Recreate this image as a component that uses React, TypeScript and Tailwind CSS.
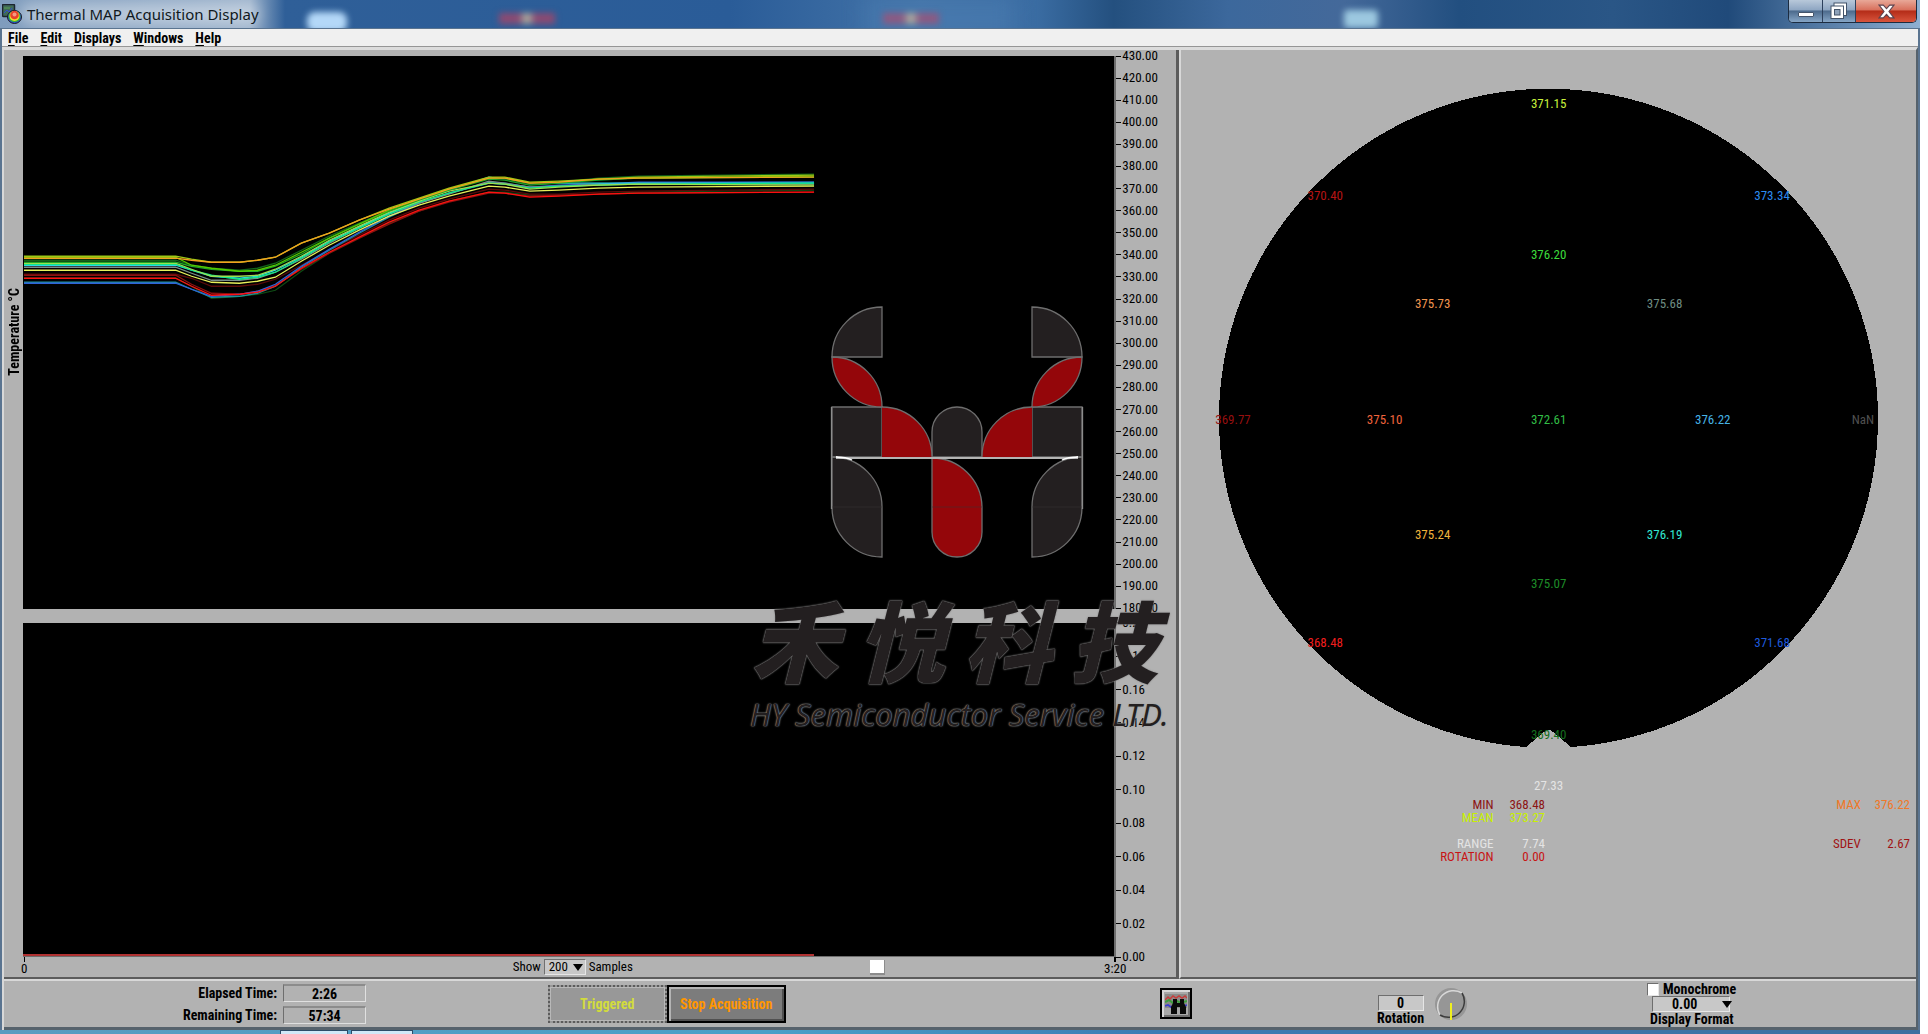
import { useState } from "react";

const menus = ["File", "Edit", "Displays", "Windows", "Help"];

const tempTicks = Array.from({ length: 26 }, (_, i) => (430 - i * 10).toFixed(2));
const rateTicks = Array.from({ length: 11 }, (_, i) => (0.2 - i * 0.02).toFixed(2));

// sample positions and trace heights in plot units (1094 x 552)
const sampleX = [1, 153, 169, 189, 217, 235, 253, 279, 307, 337, 367, 397, 427, 467, 483, 508, 537, 577, 617, 793];

const traces = [
  { color: "#0e4a14", y: [222, 222, 230, 242, 240, 238, 234, 215, 197, 182, 167, 155, 145, 136, 136, 139, 139, 138, 136, 134] },
  { color: "#5a0a0a", y: [218, 218, 222, 230, 230, 228, 223, 209, 194, 179, 164, 152, 143, 133, 134, 138, 138, 136, 135, 133] },
  { color: "#8b1010", y: [219, 219, 228, 237, 238, 235, 229, 213, 197, 182, 168, 155, 146, 137, 137, 140, 139, 138, 137, 136] },
  { color: "#1c8f96", y: [226, 226, 233, 241, 240, 237, 230, 211, 194, 177, 161, 147, 137, 126, 127, 131, 130, 129, 127, 126] },
  { color: "#2f62d8", y: [227, 227, 233, 240, 238, 235, 228, 210, 193, 176, 160, 147, 137, 127, 128, 131, 129, 128, 126, 126] },
  { color: "#ff1010", y: [222, 222, 230, 239, 238, 236, 230, 212, 196, 181, 166, 154, 145, 136, 137, 141, 140, 138, 137, 136] },
  { color: "#e8f05a", y: [214, 214, 220, 226, 227, 225, 221, 205, 189, 174, 160, 149, 140, 130, 131, 135, 134, 132, 131, 130] },
  { color: "#7a8f8a", y: [211, 211, 217, 224, 224, 222, 216, 203, 187, 172, 158, 147, 138, 125, 127, 131, 130, 128, 128, 128] },
  { color: "#29d8e8", y: [209, 209, 214, 220, 222, 220, 214, 201, 185, 171, 157, 145, 134, 121, 123, 128, 127, 127, 127, 127] },
  { color: "#10e884", y: [208, 208, 214, 219, 223, 221, 216, 202, 186, 172, 158, 146, 137, 127, 128, 132, 130, 129, 128, 127] },
  { color: "#9adf50", y: [207, 207, 213, 220, 220, 219, 213, 200, 184, 170, 156, 145, 135, 127, 128, 133, 131, 129, 128, 129] },
  { color: "#20a828", y: [206, 206, 210, 213, 215, 215, 210, 198, 182, 168, 155, 144, 134, 123, 124, 129, 127, 124, 122, 121] },
  { color: "#12641a", y: [204, 204, 209, 212, 214, 212, 207, 194, 180, 167, 154, 143, 133, 122, 123, 128, 126, 122, 120, 118] },
  { color: "#55c800", y: [201, 201, 209, 212, 215, 214, 209, 196, 182, 168, 154, 143, 133, 122, 122, 127, 126, 123, 122, 120] },
  { color: "#9cc814", y: [200, 200, 203, 206, 206, 204, 201, 187, 177, 164, 152, 142, 132, 121, 121, 126, 125, 123, 121, 119] },
  { color: "#f2a020", y: [202, 202, 204, 206, 206, 204, 201, 187, 177, 164, 153, 143, 133, 122, 122, 127, 126, 123, 122, 121] },
];

// thermocouple sites, offsets from the wafer centre in percent of its diameter
const sites = [
  { value: "371.15", x: 0, y: -47.9, color: "text-[#c8f03c]" },
  { value: "376.20", x: 0, y: -24.9, color: "text-[#3cdc3c]" },
  { value: "373.34", x: 33.9, y: -33.9, color: "text-[#2d8cf0]" },
  { value: "370.40", x: -33.9, y: -33.9, color: "text-[#b41414]" },
  { value: "375.73", x: -17.6, y: -17.6, color: "text-[#f09650]" },
  { value: "375.68", x: 17.6, y: -17.6, color: "text-[#6e8c82]" },
  { value: "369.77", x: -47.9, y: 0, color: "text-[#960f0f]" },
  { value: "375.10", x: -24.9, y: 0, color: "text-[#f0643c]" },
  { value: "372.61", x: 0, y: 0, color: "text-[#32be46]" },
  { value: "376.22", x: 24.9, y: 0, color: "text-[#46b4e6]" },
  { value: "NaN", x: 47.7, y: 0, color: "text-[#505050]" },
  { value: "375.24", x: -17.6, y: 17.6, color: "text-[#f0b43c]" },
  { value: "376.19", x: 17.6, y: 17.6, color: "text-[#32e6d2]" },
  { value: "375.07", x: 0, y: 24.9, color: "text-[#1e8c28]" },
  { value: "368.48", x: -33.9, y: 33.9, color: "text-[#f01e1e]" },
  { value: "371.68", x: 33.9, y: 33.9, color: "text-[#1e5adc]" },
  { value: "369.40", x: 0, y: 47.9, color: "text-[#146e1e]" },
];

function TitleBar() {
  return (
    <header className="relative flex h-[28px] shrink-0 items-start overflow-hidden bg-[linear-gradient(90deg,#7f9cbd_0,#9db3cc_250px,#2f5f98_285px,#2a5c98_38%,#4474a8_48%,#3a6ca2_54%,#24507f_58%,#3c689c_64%,#44699a_70%,#224f80_76%,#2a5686_84%,#204a7a_90%,#6b90b8_97%,#8fb0d2_100%)]">
      <div className="absolute left-[20px] top-[4px] h-[20px] w-[240px] rounded-full bg-white/40 blur-[7px]"></div>
      <div className="absolute left-[16%] top-[12px] h-[20px] w-[40px] rounded-lg bg-[#b4d8f8] blur-[3px]"></div>
      <div className="absolute left-[26%] top-[13px] h-[11px] w-[56px] bg-[linear-gradient(90deg,#8c4a72_35%,#b0b8a4_50%,#8c4a72_65%)] blur-[3px]"></div>
      <div className="absolute left-[45%] top-[-2px] h-[40px] w-[150px] bg-[#4a7cb0]/60 blur-[10px]"></div>
      <div className="absolute left-[46%] top-[13px] h-[11px] w-[56px] bg-[linear-gradient(90deg,#8c5a82_35%,#b0b8a4_50%,#8c5a82_65%)] blur-[3px]"></div>
      <div className="absolute left-[70%] top-[10px] h-[18px] w-[34px] rounded bg-[#9cc8e0] blur-[3px]"></div>

      <div className="relative flex items-center gap-[5px] pl-[2px] pt-[4px]">
        <svg viewBox="0 0 20 20" className="h-[20px] w-[20px]">
          <rect x="0.500" y="0.500" width="12" height="12" rx="1" fill="#3f6a58" stroke="#1c2430" strokeWidth="1.500" />
          <path d="M2 9 L5 6 L7 8 L10 4" fill="none" stroke="#3048d8" />
          <path d="M2 4 H8" stroke="#5ca050" />
          <ellipse cx="12.500" cy="13" rx="7" ry="6.500" fill="#2f4fd0" stroke="#1a1a20" />
          <ellipse cx="12.500" cy="12.500" rx="6" ry="5.500" fill="#36b436" />
          <circle cx="12.500" cy="12" r="5" fill="#f0dc28" />
          <circle cx="12.500" cy="11" r="4.300" fill="#e8402c" />
          <circle cx="12.500" cy="10.500" r="2" fill="#f49a80" />
        </svg>
        <h1 className="font-['Noto_Sans','Open_Sans',sans-serif] text-[15px] leading-[20px] text-[#101820]">Thermal MAP Acquisition Display</h1>
      </div>

      <div className="relative ml-auto mr-[3px] flex h-[23px] rounded-b-[5px] border border-t-0 border-[#1c2c40] bg-[#dbe6f0]/50 text-white">
        <button aria-label="Minimize" className="flex w-[34px] items-end justify-center rounded-bl-[4px] border-r border-[#2c405c] bg-[linear-gradient(#b8c8da_0,#8ea6c2_45%,#4c6a8c_50%,#86a6c6_100%)] pb-[5px]">
          <span className="h-[5px] w-[16px] rounded-[1px] border border-[#44546a] bg-white"></span>
        </button>
        <button aria-label="Restore" className="flex w-[33px] items-center justify-center border-r border-[#2c405c] bg-[linear-gradient(#b8c8da_0,#8ea6c2_45%,#4c6a8c_50%,#86a6c6_100%)]">
          <svg viewBox="0 0 20 18" className="h-[18px] w-[20px]">
            <rect x="5" y="1" width="12.500" height="12.500" fill="#fff" stroke="#44546a" />
            <rect x="2" y="4" width="12.500" height="12.500" fill="#fff" stroke="#44546a" />
            <rect x="5.500" y="7.500" width="5.500" height="5.500" fill="#8ea2ba" stroke="#44546a" />
          </svg>
        </button>
        <button aria-label="Close" className="flex w-[60px] items-center justify-center rounded-br-[4px] bg-[linear-gradient(#e8a898_0,#d8705c_45%,#b42c18_50%,#d8543c_100%)]">
          <svg viewBox="0 0 16 14" className="h-[15px] w-[17px]">
            <path d="M1 1 H5 L8 4.300 L11 1 H15 L10.300 7 L15 13 H11 L8 9.700 L5 13 H1 L5.700 7 Z" fill="#fff" stroke="#5c4450" />
          </svg>
        </button>
      </div>
    </header>
  );
}

function Axis({ ticks }: { ticks: string[] }) {
  return (
    <div className="-my-[7px] flex w-[60px] shrink-0 flex-col justify-between">
      {ticks.map((t) => (
        <div key={t} className="flex h-[14px] items-center gap-px">
          <span className="h-px w-[5px] bg-black"></span>
          <span className="text-[13px] leading-[14px]">{t}</span>
        </div>
      ))}
    </div>
  );
}

function Watermark() {
  return (
    <div className="pointer-events-none absolute right-[7px] top-[255px] z-10 flex w-[420px] flex-col items-center text-[#231f20]">
      <svg viewBox="-2 -2 254 254" className="mr-[4px] h-[254px] w-[254px]" stroke="#6e6e6e" strokeWidth="1.300">
        <g fill="#231f20">
          <path d="M50 0 A50 50 0 0 0 0 50 H50 Z" />
          <path d="M200 0 A50 50 0 0 1 250 50 H200 Z" />
          <path d="M0 100 H50 V150 H0 Z" />
          <path d="M200 100 H250 V150 H200 Z" />
          <path d="M100 150 V125 A25 25 0 0 1 150 125 V150 Z" />
          <path d="M0 150 A50 50 0 0 1 50 200 V250 A50 50 0 0 1 0 200 Z" />
          <path d="M250 150 A50 50 0 0 0 200 200 V250 A50 50 0 0 0 250 200 Z" />
        </g>
        <g fill="#94060a">
          <path d="M0 50 A50 50 0 0 1 50 100 A50 50 0 0 1 0 50 Z" />
          <path d="M250 50 A50 50 0 0 0 200 100 A50 50 0 0 0 250 50 Z" />
          <path d="M50 100 A50 50 0 0 1 100 150 H50 Z" stroke="none" />
          <path d="M200 100 A50 50 0 0 0 150 150 H200 Z" stroke="none" />
          <path d="M100 151 A50 50 0 0 1 150 200 V225 A25 25 0 0 1 100 225 Z" />
        </g>
        <path d="M50 100 A50 50 0 0 1 100 150 M200 100 A50 50 0 0 0 150 150" fill="none" />
        <path d="M4 151 H246" stroke="#b4b4b4" strokeWidth="2" />
        <path d="M4 150 Q14 150 20 153 L14 151 Z M246 150 Q236 150 230 153 L236 151 Z" fill="#fff" stroke="#fff" />
        <path d="M-0.500 100 V202 M250.500 100 V202" stroke="#8c8c8c" />
        <path d="M0 200 H50 M100 200 H150 M200 200 H250" stroke="#3a3436" strokeWidth="0.500" />
      </svg>
      <div className="mr-[10px] mt-[20px] flex w-[408px] justify-between font-['Noto_Sans_CJK_SC',sans-serif] text-[88px] font-black italic leading-[118px] [text-shadow:0_0_2px_#8c8c8c,0_0_1px_#8c8c8c]">
        <span>禾</span>
        <span>悦</span>
        <span>科</span>
        <span>技</span>
      </div>
      <p className="whitespace-nowrap font-['Noto_Sans',sans-serif] text-[31px] italic leading-[34px] [text-shadow:0_0_2px_#a0a0a0,0_0_1px_#a0a0a0]">HY Semiconductor Service LTD.</p>
    </div>
  );
}

function ChartPanel() {
  const [samples, setSamples] = useState("200");

  return (
    <section className="relative flex min-w-0 flex-[1176] flex-col border-b-2 border-r-[3px] border-[#5c5c5c] pt-[6px]">
      <div className="flex min-h-0 flex-[552]">
        <div className="flex w-[19px] shrink-0 items-center justify-center">
          <span className="rotate-180 whitespace-nowrap text-[14px] font-bold leading-[16px] [writing-mode:vertical-rl]">Temperature °C</span>
        </div>
        <div className="relative min-w-0 flex-1 border-r-2 border-[#6e6e6e] bg-black">
          <svg viewBox="0 0 1094 552" preserveAspectRatio="none" className="absolute inset-0 h-full w-full">
            {traces.map((t) => (
              <polyline
                key={t.color}
                points={sampleX.map((x, i) => `${x},${t.y[i]}`).join(" ")}
                fill="none"
                stroke={t.color}
                strokeWidth="1.300"
              />
            ))}
          </svg>
        </div>
        <Axis ticks={tempTicks} />
      </div>

      <div className="h-[14px] shrink-0"></div>

      <div className="flex min-h-0 flex-[334]">
        <div className="w-[19px] shrink-0"></div>
        <div className="flex min-w-0 flex-1 items-end border-b border-r-2 border-[#6e6e6e] bg-black">
          <div className="h-[2px] w-[72.500%] bg-[#b03232]"></div>
        </div>
        <Axis ticks={rateTicks} />
      </div>

      <div className="flex h-[20px] shrink-0 items-start pl-[17px] text-[13px]">
        <div className="flex flex-col items-center">
          <span className="h-[5px] w-px bg-black"></span>
          <span className="leading-[14px]">0</span>
        </div>
        <div className="ml-[42%] flex h-[18px] items-center gap-[3px] pt-[2px]">
          <label htmlFor="samples">Show</label>
          <span className="relative flex">
            <select
              id="samples"
              value={samples}
              onChange={(e) => setSamples(e.target.value)}
              className="h-[16px] w-[42px] appearance-none border border-b-[#e6e6e6] border-l-[#707070] border-r-[#e6e6e6] border-t-[#707070] bg-[#c8c8c8] pl-[4px] text-[13px] leading-[14px]"
            >
              <option>100</option>
              <option>200</option>
              <option>400</option>
            </select>
            <svg viewBox="0 0 10 7" className="pointer-events-none absolute right-[3px] top-[5px] h-[7px] w-[10px]">
              <path d="M0 0 H10 L5 7 Z" />
            </svg>
          </span>
          <span>Samples</span>
        </div>
        <input type="checkbox" aria-label="Hold display" className="ml-[20.500%] mt-[3px] h-[15px] w-[15px] appearance-none border-b-2 border-r border-[#8c8c8c] bg-white" />
        <div className="ml-auto mr-[50px] flex flex-col items-center">
          <span className="h-[5px] w-[2px] bg-black"></span>
          <span className="leading-[14px]">3:20</span>
        </div>
      </div>

      <Watermark />
    </section>
  );
}

function WaferPanel() {
  return (
    <section className="min-w-0 flex-[737] border-b-2 border-l-2 border-b-[#5c5c5c] border-l-[#d8d8d8] pt-[39px] text-[13px] leading-[13px]">
      <div className="relative mx-auto aspect-square w-[89.700%]">
        <svg viewBox="0 0 658 658" className="absolute inset-0 h-full w-full" shapeRendering="crispEdges">
          <path d="M306.500 657 A329 329 0 1 1 351.500 657 L331 640 H327 Z" fill="#000" />
        </svg>
        {sites.map((s) => (
          <span
            key={s.value}
            className={`absolute -translate-x-1/2 -translate-y-1/2 ${s.color}`}
            style={{ left: `${50 + s.x}%`, top: `${50 + s.y}%` }}
          >
            {s.value}
          </span>
        ))}
      </div>
      <p className="mt-[31px] text-center text-[#e4e4e4]">27.33</p>
      <table className="mt-[6px] w-full table-fixed border-collapse text-right">
        <tbody>
          <tr className="h-[13px]">
            <th className="w-[42.500%] font-normal text-[#8c1414]">MIN</th>
            <td className="w-[7%] text-[#8c1414]">368.48</td>
            <th className="w-[43%] font-normal text-[#f07828]">MAX</th>
            <td className="pr-[6px] text-[#f07828]">376.22</td>
          </tr>
          <tr className="h-[13px] text-[#c8f000]">
            <th className="font-normal">MEAN</th>
            <td>373.27</td>
          </tr>
          <tr className="h-[13px]">
            <td></td>
          </tr>
          <tr className="h-[13px]">
            <th className="font-normal text-[#e4e4e4]">RANGE</th>
            <td className="text-[#e4e4e4]">7.74</td>
            <th className="font-normal text-[#a01414]">SDEV</th>
            <td className="pr-[6px] text-[#a01414]">2.67</td>
          </tr>
          <tr className="h-[13px] text-[#c81414]">
            <th className="font-normal">ROTATION</th>
            <td>0.00</td>
          </tr>
        </tbody>
      </table>
    </section>
  );
}

function TimeField({ label, value }: { label: string; value: string }) {
  return (
    <div className="flex h-[18px] items-center justify-end gap-[6px]">
      <span className="whitespace-nowrap">{label}</span>
      <output className="flex h-[18px] w-[83px] items-center justify-center border border-b-[#e0e0e0] border-l-[#6e6e6e] border-r-[#e0e0e0] border-t-2 border-t-[#8c8c8c]">{value}</output>
    </div>
  );
}

function ControlBar() {
  const [rotation, setRotation] = useState("0");
  const [mono, setMono] = useState(false);

  return (
    <footer className="flex h-[51px] shrink-0 border-b-[3px] border-t-2 border-b-[#56626c] border-t-[#d8d8d8] text-[14px] font-bold leading-[16px]">
      <div className="ml-[9%] flex w-[190px] shrink-0 flex-col gap-[4px] pt-[3px]">
        <TimeField label="Elapsed Time:" value="2:26" />
        <TimeField label="Remaining Time:" value="57:34" />
      </div>

      <div className="ml-[9.500%] flex pt-[4px]">
        <button disabled className="h-[38px] w-[119px] border-2 border-dotted border-[#5c5c5c] bg-[#989898] text-[#d2dc3c] outline-1 -outline-offset-3 outline-[#b8b8b8]">Triggered</button>
        <button className="h-[38px] w-[119px] border-2 border-black bg-[#7c7c7c] text-[#ff9600] shadow-[inset_2px_2px_0_#b4b4b4,inset_-2px_-2px_0_#505050]">Stop Acquisition</button>
      </div>

      <button aria-label="Find traces" className="ml-[19.600%] mt-[7px] flex h-[31px] w-[32px] items-center justify-center border-2 border-black bg-[#a8a8a8] shadow-[inset_2px_2px_0_#d8d8d8,inset_-2px_-2px_0_#707070]">
        <svg viewBox="0 0 22 20" className="h-[20px] w-[22px]">
          <rect width="22" height="14" fill="#8c8a88" />
          <path d="M0 6 L3 3 L5 5 L8 2 L11 4 L14 2 L17 4 L20 2 L22 4" fill="none" stroke="#c83c3c" strokeWidth="1.500" />
          <path d="M0 8 L4 6 L8 9 L12 7 L16 9 L22 7" fill="none" stroke="#3ca03c" strokeWidth="2" />
          <path d="M0 12 L3 11 L6 13 L10 11 M18 12 L22 11" fill="none" stroke="#3c3cd2" strokeWidth="1.800" />
          <path d="M8 5 H12 V9 H15 V5 H19 V9 L21 13 V20 H15 V13 H12 V20 H6 V13 L8 9 Z" fill="#0a0a0a" />
        </svg>
      </button>

      <div className="ml-[9.650%] flex gap-[10px] pt-[6px]">
        <div className="flex flex-col items-center pt-[8px] leading-[15px]">
          <input
            id="rotation"
            value={rotation}
            onChange={(e) => setRotation(e.target.value)}
            className="h-[16px] w-[46px] border border-b-[#e6e6e6] border-l-[#6e6e6e] border-r-[#e6e6e6] border-t-[#6e6e6e] bg-[#c8c8c8] text-center"
          />
          <label htmlFor="rotation">Rotation</label>
        </div>
        <svg viewBox="0 0 34 34" className="h-[34px] w-[34px]">
          <circle cx="17" cy="17" r="16" fill="#969696" />
          <path d="M6 28 A16 16 0 0 1 28 6" fill="none" stroke="#d8d8d8" strokeWidth="1.500" />
          <path d="M28 6 A16 16 0 0 1 6 28" fill="none" stroke="#3c3c3c" strokeWidth="1.500" />
          <path d="M17 16 V33" stroke="#f0f01e" strokeWidth="2" />
        </svg>
      </div>

      <div className="ml-[9.350%] flex flex-col pt-px leading-[14px]">
        <label className="flex h-[14px] items-center gap-[4px]">
          <input
            type="checkbox"
            checked={mono}
            onChange={(e) => setMono(e.target.checked)}
            className="h-[13px] w-[12px] appearance-none border border-b-[#e6e6e6] border-l-[#6e6e6e] border-r-[#e6e6e6] border-t-[#6e6e6e] bg-white checked:bg-black"
          />
          Monochrome
        </label>
        <span className="relative ml-[5px] flex">
          <select
            id="format"
            defaultValue="0.00"
            className="h-[16px] w-[78px] appearance-none border border-b-[#e6e6e6] border-l-[#6e6e6e] border-r-[#e6e6e6] border-t-[#6e6e6e] bg-[#c8c8c8] pl-[19px] leading-[14px]"
          >
            <option>0</option>
            <option>0.0</option>
            <option>0.00</option>
          </select>
          <svg viewBox="0 0 10 7" className="pointer-events-none absolute right-[4px] top-[5px] h-[7px] w-[10px]">
            <path d="M0 0 H10 L5 7 Z" />
          </svg>
        </span>
        <label htmlFor="format" className="pl-[3px]">Display Format</label>
      </div>
    </footer>
  );
}

export default function App() {
  return (
    <div className="h-screen min-h-[700px] bg-white pr-[8px] font-['Roboto_Condensed','Liberation_Sans',sans-serif] text-black">
      <div className="flex h-full flex-col">
        <TitleBar />

        <div className="flex min-h-0 flex-1 flex-col border-l-2 border-r-2 border-t border-[#5a7490]">
          <nav className="flex h-[18px] shrink-0 items-center gap-[12px] border-b border-[#969696] bg-[#f0f0f0] pl-[6px]">
            {menus.map((m) => (
              <button key={m} className="text-[14px] font-bold leading-[16px]">
                <span className="underline underline-offset-2">{m[0]}</span>
                {m.slice(1)}
              </button>
            ))}
          </nav>
          <div className="flex min-h-0 flex-1 flex-col border-l-2 border-r-2 border-t-[3px] border-l-[#d8d8d8] border-r-[#56626c] border-t-[#dcdcdc] bg-[#b2b2b2]">
            <main className="flex min-h-0 flex-1">
              <ChartPanel />
              <WaferPanel />
            </main>
            <ControlBar />
          </div>
        </div>

        <div className="flex h-[4px] shrink-0 bg-[linear-gradient(90deg,#5a9cc0_0,#4aa0c8_40%,#3c7cb4_60%,#3c70a0_100%)]">
          <span className="ml-[280px] h-[4px] w-[68px] border border-b-0 border-[#2c4c68] bg-[#d0e8f8]"></span>
          <span className="ml-[3px] h-[4px] w-[62px] border border-b-0 border-[#2c4c68] bg-[#d0e8f8]"></span>
        </div>
      </div>
    </div>
  );
}
